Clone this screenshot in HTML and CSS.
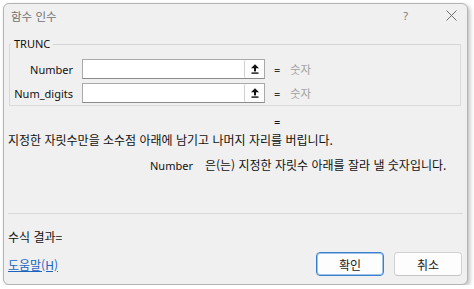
FILE: index.html
```html
<!DOCTYPE html>
<html lang="ko">
<head>
<meta charset="utf-8">
<link rel="stylesheet" href="styles.css">
</head>
<body>
<div class="window">
  <div class="titlebar">
    <span class="title">함수 인수</span>
    <span class="help">?</span>
    <svg class="close" width="11" height="11" viewBox="0 0 11 11"><path d="M0.5 0.5L10.5 10.5M10.5 0.5L0.5 10.5" stroke="#6e6e6e" stroke-width="1" fill="none"/></svg>
  </div>
  <div class="content">
    <fieldset class="group">
      <legend>TRUNC</legend>
      <div class="arg-row">
        <label class="arg-label">Number</label>
        <div class="arg-input">
          <span class="field"></span>
          <span class="pick"><svg width="8" height="10" viewBox="0 0 8 10"><path d="M0 4.2L4 0.2L8 4.2Z" fill="#111"/><rect x="3" y="4" width="2" height="3.4" fill="#111"/><rect x="0.5" y="8.4" width="7" height="1.4" fill="#111"/></svg></span>
        </div>
        <span class="eq">=</span>
        <span class="type">숫자</span>
      </div>
      <div class="arg-row">
        <label class="arg-label">Num_digits</label>
        <div class="arg-input">
          <span class="field"></span>
          <span class="pick"><svg width="8" height="10" viewBox="0 0 8 10"><path d="M0 4.2L4 0.2L8 4.2Z" fill="#111"/><rect x="3" y="4" width="2" height="3.4" fill="#111"/><rect x="0.5" y="8.4" width="7" height="1.4" fill="#111"/></svg></span>
        </div>
        <span class="eq">=</span>
        <span class="type">숫자</span>
      </div>
    </fieldset>
    <div class="result-eq">=</div>
    <div class="desc">지정한 자릿수만을 소수점 아래에 남기고 나머지 자리를 버립니다.</div>
    <div class="arg-desc"><span class="arg-name">Number</span>은(는) 지정한 자릿수 아래를 잘라 낼 숫자입니다.</div>
    <div class="separator"></div>
    <div class="formula">수식 결과=</div>
    <div class="footer">
      <a class="link" href="#">도움말(H)</a>
      <div class="buttons">
        <button class="btn primary">확인</button>
        <button class="btn">취소</button>
      </div>
    </div>
  </div>
</div>
</body>
</html>
```
FILE: styles.css
```css
html, body {
  margin: 0;
  padding: 0;
  background: #ffffff;
}
body {
  font-family: "Noto Sans CJK KR", "Noto Sans", sans-serif;
  font-size: 12px;
  color: #111111;
}
.window {
  box-sizing: border-box;
  margin: 3px 0 0 3px;
  width: 465px;
  height: 282px;
  background: #f0f0f0;
  border: 1px solid #b4b4b4;
  border-radius: 6px;
  box-shadow: 2px 2px 4px rgba(0,0,0,0.25);
}
.titlebar {
  height: 23px;
  display: flex;
  align-items: center;
  padding-left: 7px;
  padding-right: 10px;
}
.title {
  color: #707070;
  font-size: 11.5px;
  flex: 1;
}
.help {
  color: #7a7a7a;
  font-family: "Noto Sans", sans-serif;
  font-size: 11px;
  margin-right: 38px;
}
.close {
  display: block;
}
.content {
  padding: 0 4px 0 4px;
}
.group {
  margin: 9px 0 0 1px;
  padding: 0 0 2px 0;
  border: 1px solid #dadada;
  border-top-color: #d6d6d6;
  width: 452px;
  box-sizing: border-box;
}
.group legend {
  padding: 0 3px 0 3px;
  margin-left: 1px;
  font-family: "Noto Sans", sans-serif;
  font-size: 11px;
  line-height: 16px;
  color: #111;
}
.arg-row {
  display: flex;
  align-items: center;
  height: 20px;
  margin-top: 4px;
}
.arg-row:first-of-type {
  margin-top: 7px;
}
.arg-label {
  width: 63px;
  text-align: right;
  font-family: "Noto Sans", sans-serif;
  font-size: 11px;
  color: #111;
  margin-right: 9px;
}
.arg-input {
  display: flex;
  width: 183px;
  height: 20px;
  box-sizing: border-box;
  background: #fff;
  border: 1px solid #a9a9a9;
  border-bottom-color: #8a8a8a;
}
.field {
  flex: 1;
}
.pick {
  width: 19px;
  display: flex;
  align-items: center;
  justify-content: center;
  background: #fdfdfd;
  border-left: 1px solid #cfcfcf;
  border-radius: 2px;
}
.pick svg {
  display: block;
}
.eq {
  margin-left: 9px;
  width: 16px;
  font-family: "Noto Sans", sans-serif;
  font-size: 11px;
  color: #333;
}
.type {
  color: #a0a0a0;
  font-size: 11.5px;
}
.result-eq {
  margin-top: 8px;
  line-height: 16px;
  padding-left: 266px;
  font-family: "Noto Sans", sans-serif;
  font-size: 11px;
}
.desc {
  margin-top: 2px;
  line-height: 16px;
}
.arg-desc {
  margin-top: 9px;
  line-height: 16px;
  padding-left: 142px;
}
.arg-name {
  font-family: "Noto Sans", sans-serif;
  font-size: 11px;
  margin-right: 12px;
}
.separator {
  margin-top: 39px;
  height: 1px;
  background: #d9d9d9;
  width: 455px;
}
.formula {
  margin-top: 15px;
  line-height: 16px;
}
.footer {
  margin-top: 7px;
  display: flex;
  align-items: center;
  justify-content: space-between;
  padding-right: 1px;
}
.link {
  color: #1a64c0;
  text-decoration: underline;
}
.buttons {
  display: flex;
  gap: 10px;
}
.btn {
  width: 68px;
  height: 24px;
  box-sizing: border-box;
  background: #fdfdfd;
  border: 1px solid #d2d2d2;
  border-bottom-color: #c4c4c4;
  border-radius: 4px;
  font-family: "Noto Sans CJK KR", sans-serif;
  font-size: 12px;
  color: #1a1a1a;
  padding: 0;
}
.btn.primary {
  border: 1px solid #3a7fcc;
  box-shadow: inset 0 0 0 1px #9cc3ea;
}
```
